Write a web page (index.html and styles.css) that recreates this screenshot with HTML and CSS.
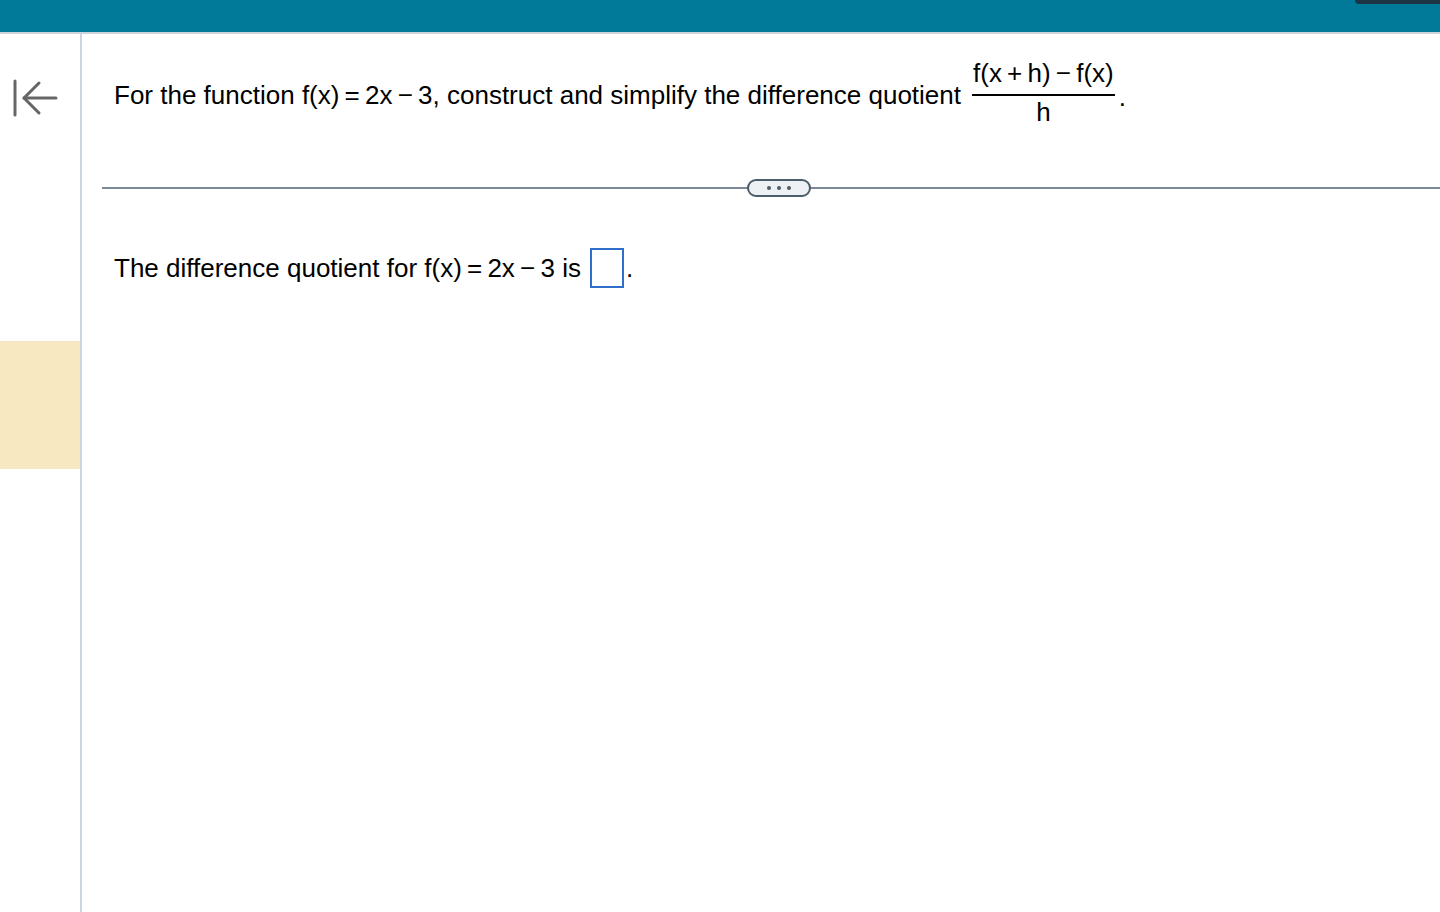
FILE: index.html
```html
<!DOCTYPE html>
<html>
<head>
<meta charset="utf-8">
<link rel="stylesheet" href="styles.css">
</head>
<body>
<header class="topbar"><div class="tab"></div></header>
<div class="layout">
  <aside class="sidebar">
    <button class="collapse" aria-label="Collapse">
      <svg width="48" height="40" viewBox="0 0 48 40"><g fill="none" stroke="#666" stroke-width="3" stroke-linecap="round" stroke-linejoin="round"><path d="M4 3 V37"/><path d="M13 20 H45"/><path d="M28 5 L13 20 L28 35"/></g></svg>
    </button>
    <div class="highlight"></div>
  </aside>
  <main class="content">
    <div class="question">
      <span>For the function f(x)&#8201;=&#8201;2x&#8201;−&#8201;3, construct and simplify the difference quotient</span>
      <span class="frac"><span class="num">f(x&#8201;+&#8201;h)&#8201;−&#8201;f(x)</span><span class="den">h</span></span><span class="dot">.</span>
    </div>
    <div class="divider"><span class="pill"><i></i><i></i><i></i></span></div>
    <div class="answer">
      <span>The difference quotient for f(x)&#8201;=&#8201;2x&#8201;−&#8201;3 is</span><span class="box"></span><span>.</span>
    </div>
  </main>
</div>
</body>
</html>
```
FILE: styles.css
```css
* { box-sizing: border-box; }
html, body { margin: 0; padding: 0; height: 100%; }
body { font-family: "Liberation Sans", Arial, sans-serif; color: #000; background: #fff; overflow: hidden; }
.topbar { height: 34px; background: #017a99; border-bottom: 2px solid #ccd3da; position: relative; }
.tab { position: absolute; right: -20px; top: 0; width: 105px; height: 4px; background: #1d3444; border-radius: 0 0 0 12px; }
.layout { display: flex; height: calc(100% - 34px); }
.sidebar { width: 82px; flex-shrink: 0; border-right: 2px solid #ccd6e0; display: flex; flex-direction: column; }
.collapse { background: none; border: 0; padding: 0; margin: 44px 0 0 11px; width: 48px; height: 40px; cursor: pointer; }
.collapse svg { display: block; }
.highlight { margin-top: 223px; height: 128px; background: #f8e8c1; }
.content { flex: 1; padding-left: 32px; font-size: 26px; }
.question { display: flex; align-items: center; height: 122px; }
.frac { display: inline-flex; flex-direction: column; align-items: center; margin-left: 11px; font-size: 26px; }
.num { padding: 0 1px 6px; border-bottom: 2px solid #000; line-height: 30px; margin-top: -4px; }
.den { line-height: 32px; }
.dot { align-self: center; margin-top: 4px; margin-left: 4px; }
.divider { margin-left: -12px; height: 2px; background: #7c8896; position: relative; margin-top: 31px; }
.pill { position: absolute; left: 645px; top: -8px; width: 64px; height: 18px; border: 2px solid #4d5c69; border-radius: 9px; background: #eef1f4; display: flex; align-items: center; justify-content: center; gap: 6px; }
.pill i { width: 4px; height: 4px; border-radius: 50%; background: #4d5c69; display: block; }
.answer { display: flex; align-items: center; margin-top: 59px; }
.box { display: inline-block; width: 34px; height: 40px; border: 2px solid #2f6fc9; margin-left: 9px; margin-right: 2px; }
```
